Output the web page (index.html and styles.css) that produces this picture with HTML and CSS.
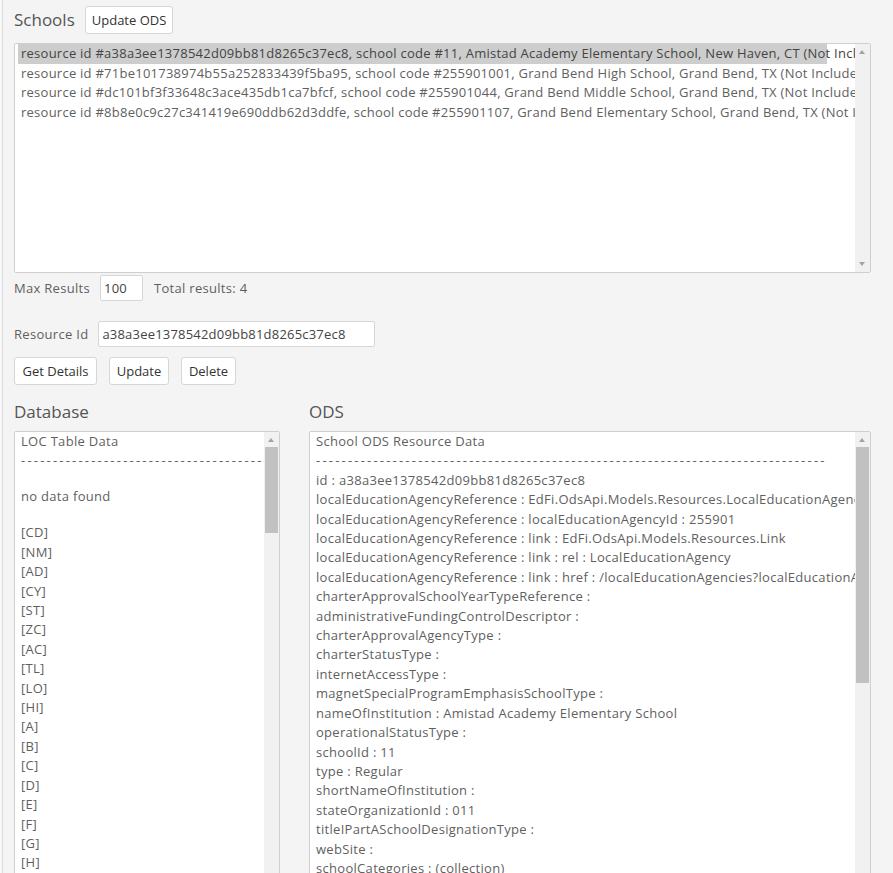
FILE: index.html
```html
<!DOCTYPE html>
<html>
<head>
<meta charset="utf-8">
<link rel="stylesheet" href="styles.css">
</head>
<body>
<div class="page">
  <div class="head-row">
    <h2 class="title">Schools</h2>
    <button class="btn">Update ODS</button>
  </div>

  <div class="listbox">
    <div class="list-content">
      <div class="opt selected">resource id #a38a3ee1378542d09bb81d8265c37ec8, school code #11, Amistad Academy Elementary School, New Haven, CT (Not Included)</div>
      <div class="opt">resource id #71be101738974b55a252833439f5ba95, school code #255901001, Grand Bend High School, Grand Bend, TX (Not Included)</div>
      <div class="opt">resource id #dc101bf3f33648c3ace435db1ca7bfcf, school code #255901044, Grand Bend Middle School, Grand Bend, TX (Not Included)</div>
      <div class="opt">resource id #8b8e0c9c27c341419e690ddb62d3ddfe, school code #255901107, Grand Bend Elementary School, Grand Bend, TX (Not Included)</div>
    </div>
    <div class="vscroll list-scroll">
      <span class="arrow up"></span>
      <span class="arrow down"></span>
    </div>
  </div>

  <div class="row max-row">
    <label class="lbl">Max Results</label>
    <input class="inp inp-max" type="text" value="100">
    <span class="lbl">Total results: 4</span>
  </div>

  <div class="row id-row">
    <label class="lbl">Resource Id</label>
    <input class="inp inp-id" type="text" value="a38a3ee1378542d09bb81d8265c37ec8">
  </div>

  <div class="row btn-row">
    <button class="btn">Get Details</button>
    <button class="btn">Update</button>
    <button class="btn">Delete</button>
  </div>

  <div class="panels">
    <div class="panel panel-db">
      <h2 class="title sub">Database</h2>
      <div class="textbox">
        <div class="tb-text"><div>LOC Table Data</div><div class="rule">------------------------------------------</div><div class="blank"></div><div>no data found</div><div class="blank"></div><div>[CD]</div><div>[NM]</div><div>[AD]</div><div>[CY]</div><div>[ST]</div><div>[ZC]</div><div>[AC]</div><div>[TL]</div><div>[LO]</div><div>[HI]</div><div>[A]</div><div>[B]</div><div>[C]</div><div>[D]</div><div>[E]</div><div>[F]</div><div>[G]</div><div>[H]</div><div>[I]</div></div>
        <div class="vscroll">
          <span class="arrow up"></span>
          <span class="thumb thumb-db"></span>
        </div>
      </div>
    </div>
    <div class="panel panel-ods">
      <h2 class="title sub">ODS</h2>
      <div class="textbox">
        <div class="tb-text"><div>School ODS Resource Data</div><div class="rule">--------------------------------------------------------------------------------</div><div>id : a38a3ee1378542d09bb81d8265c37ec8</div><div>localEducationAgencyReference : EdFi.OdsApi.Models.Resources.LocalEducationAgencyReference</div><div>localEducationAgencyReference : localEducationAgencyId : 255901</div><div>localEducationAgencyReference : link : EdFi.OdsApi.Models.Resources.Link</div><div>localEducationAgencyReference : link : rel : LocalEducationAgency</div><div>localEducationAgencyReference : link : href : /localEducationAgencies?localEducationAgencyId=255901</div><div>charterApprovalSchoolYearTypeReference :</div><div>administrativeFundingControlDescriptor :</div><div>charterApprovalAgencyType :</div><div>charterStatusType :</div><div>internetAccessType :</div><div>magnetSpecialProgramEmphasisSchoolType :</div><div>nameOfInstitution : Amistad Academy Elementary School</div><div>operationalStatusType :</div><div>schoolId : 11</div><div>type : Regular</div><div>shortNameOfInstitution :</div><div>stateOrganizationId : 011</div><div>titleIPartASchoolDesignationType :</div><div>webSite :</div><div>schoolCategories : (collection)</div><div>schoolCategories : [0] : schoolCategoryType : Elementary School</div></div>
        <div class="vscroll">
          <span class="arrow up"></span>
          <span class="thumb thumb-ods"></span>
        </div>
      </div>
    </div>
  </div>
</div>
</body>
</html>
```

FILE: styles.css
```css
html, body {
  margin: 0;
  padding: 0;
  background: #f7f7f7;
  height: 100%;
  overflow: hidden;
}

body {
  font-family: "Open Sans", "Liberation Sans", sans-serif;
  font-size: 13px;
  color: #5f5f5f;
}

.page {
  margin-left: 2px;
  border-left: 1px solid #dcdcdc;
  background: #f4f4f4;
  padding: 6px 0 0 11px;
  width: 857px;
  min-height: 900px;
  padding-right: 22px;
}

.head-row {
  display: flex;
  align-items: center;
  height: 28px;
}

.title {
  margin: 0;
  font-size: 17px;
  font-weight: normal;
  color: #555;
  line-height: 22px;
}

.head-row .btn {
  margin-left: 10px;
}

.btn {
  font-family: "Open Sans", "Liberation Sans", sans-serif;
  font-size: 13px;
  color: #333;
  background: #fff;
  border: 1px solid #d6d6d6;
  border-radius: 3px;
  height: 28px;
  padding: 0 6px;
  line-height: 26px;
  box-sizing: border-box;
}

.listbox {
  margin-top: 9px;
  height: 230px;
  box-sizing: border-box;
  border: 1px solid #cfcfcf;
  border-radius: 2px;
  background: #fff;
  display: flex;
  overflow: hidden;
}

.list-content {
  flex: 1;
  overflow: hidden;
  padding-left: 3px;
  min-width: 0;
}

.opt {
  width: 809px;
  padding-left: 3px;
  box-sizing: border-box;
  white-space: nowrap;
  line-height: 19.5px;
  height: 19.5px;
  overflow: visible;
  letter-spacing: 0.25px;
}

.opt.selected {
  background: #cdcdcd;
  color: #444;
}

.vscroll {
  width: 15px;
  flex: none;
  background: #f1f1f1;
  position: relative;
}

.arrow {
  position: absolute;
  left: 4px;
  width: 0;
  height: 0;
  border-left: 3.5px solid transparent;
  border-right: 3.5px solid transparent;
}

.arrow.up {
  top: 6px;
  border-bottom: 4px solid #a3a3a3;
}

.arrow.down {
  bottom: 6px;
  border-top: 4px solid #a3a3a3;
}

.thumb {
  position: absolute;
  left: 1px;
  right: 1px;
  top: 15px;
  background: #c1c1c1;
}

.thumb-db {
  height: 86px;
}

.thumb-ods {
  height: 236px;
}

.row {
  display: flex;
  align-items: center;
}

.max-row {
  margin-top: 2px;
  height: 26px;
}

.max-row .inp-max {
  margin-left: 10px;
  margin-right: 11px;
}

.lbl {
  color: #5f5f5f;
  letter-spacing: 0.3px;
}

.inp {
  font-family: "Open Sans", "Liberation Sans", sans-serif;
  font-size: 13px;
  color: #444;
  height: 26px;
  box-sizing: border-box;
  border: 1px solid #d6d6d6;
  border-radius: 2px;
  background: #fff;
  padding: 0 3px;
  outline: none;
  letter-spacing: 0.2px;
}

.inp-max {
  width: 43px;
}

.id-row {
  margin-top: 20px;
  height: 26px;
}

.inp-id {
  width: 277px;
  margin-left: 10px;
}

.btn-row {
  margin-top: 10px;
  gap: 12px;
}

.btn-row .btn:first-child {
  width: 83px;
}

.btn-row .btn:nth-child(2) {
  width: 60px;
}

.btn-row .btn:nth-child(3) {
  width: 55px;
}

.panels {
  display: flex;
  gap: 29px;
  margin-top: 16px;
}

.panel-db {
  width: 266px;
}

.panel-ods {
  width: 562px;
}

.sub {
  margin-bottom: 8px;
}

.textbox {
  height: 470px;
  box-sizing: border-box;
  border: 1px solid #cfcfcf;
  border-radius: 2px;
  background: #fff;
  display: flex;
  overflow: hidden;
}

.tb-text {
  flex: 1;
  min-width: 0;
  overflow: hidden;
  padding-left: 6px;
  white-space: nowrap;
  line-height: 19.4px;
  letter-spacing: 0.3px;
}

.rule {
  letter-spacing: 2.2px;
}

.blank {
  height: 16.6px;
}
```
